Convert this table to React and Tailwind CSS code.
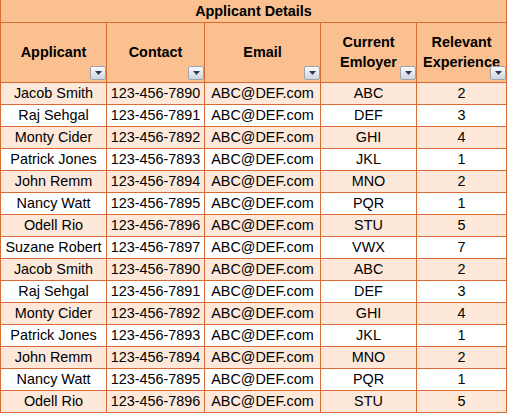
import React from "react";

const rows = [
	["Jacob Smith", "123-456-7890", "ABC", "2"],
	["Raj Sehgal", "123-456-7891", "DEF", "3"],
	["Monty Cider", "123-456-7892", "GHI", "4"],
	["Patrick Jones", "123-456-7893", "JKL", "1"],
	["John Remm", "123-456-7894", "MNO", "2"],
	["Nancy Watt", "123-456-7895", "PQR", "1"],
	["Odell Rio", "123-456-7896", "STU", "5"],
	["Suzane Robert", "123-456-7897", "VWX", "7"],
	["Jacob Smith", "123-456-7890", "ABC", "2"],
	["Raj Sehgal", "123-456-7891", "DEF", "3"],
	["Monty Cider", "123-456-7892", "GHI", "4"],
	["Patrick Jones", "123-456-7893", "JKL", "1"],
	["John Remm", "123-456-7894", "MNO", "2"],
	["Nancy Watt", "123-456-7895", "PQR", "1"],
	["Odell Rio", "123-456-7896", "STU", "5"],
];

const headers = [
	["Applicant"],
	["Contact"],
	["Email"],
	["Current", "Emloyer"],
	["Relevant", "Experience"],
];

const FilterButton = () => (
	<span className="absolute right-0 bottom-[2px] flex h-[14px] w-[16px] items-center justify-center rounded-[2px] border border-[#9ea4ad] bg-gradient-to-b from-[#fbfbfc] to-[#cfd4dc]">
		<svg width="7" height="4" viewBox="0 0 7 4">
			<path d="M0 0 L7 0 L3.5 4 Z" fill="#2c3a55" />
		</svg>
	</span>
);

export default function App() {
	const cell = "border border-[#d86b33] p-0 text-center";
	return (
		<div className="w-[507px] h-[414px] bg-white font-['Liberation_Sans',Arial,sans-serif] text-[14.4px] text-black">
			<table className="table-fixed border-collapse w-[506px]">
				<colgroup>
					<col className="w-[106px]" />
					<col className="w-[98px]" />
					<col className="w-[116px]" />
					<col className="w-[96px]" />
					<col className="w-[90px]" />
				</colgroup>
				<thead>
					<tr className="h-[22px] bg-[#fac090]">
						<th colSpan={5} className="border-x border-b border-[#d86b33] p-0 text-center font-bold leading-4">
							Applicant Details
						</th>
					</tr>
					<tr className="h-[60px] bg-[#fac090]">
						{headers.map((h, i) => (
							<th key={i} className={`${cell} relative font-bold leading-5`}>
								{h.map((line, j) => (
									<div key={j}>{line}</div>
								))}
								<FilterButton />
							</th>
						))}
					</tr>
				</thead>
				<tbody>
					{rows.map((r, i) => (
						<tr key={i} className={`h-[22px] leading-[18px] ${i % 2 === 0 ? "bg-[#fde8d9]" : "bg-white"}`}>
							<td className={cell}>{r[0]}</td>
							<td className={cell}>{r[1]}</td>
							<td className={cell}>ABC@DEF.com</td>
							<td className={cell}>{r[2]}</td>
							<td className={cell}>{r[3]}</td>
						</tr>
					))}
				</tbody>
			</table>
		</div>
	);
}
